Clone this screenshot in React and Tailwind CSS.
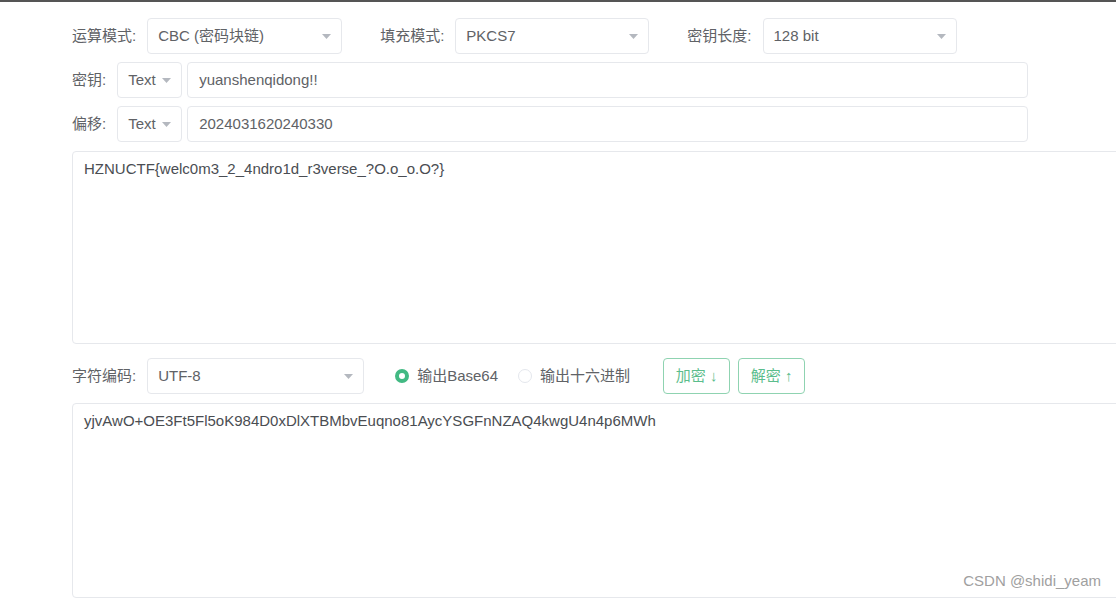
import React from 'react';

const FONT = { fontFamily: '"Liberation Sans", "Noto Sans CJK SC", Arial, sans-serif' };

const Caret = () => (
  <svg width="9" height="5" viewBox="0 0 9 5" className="shrink-0">
    <path d="M0 0 L9 0 L4.5 5 Z" fill="#b4b8bf" />
  </svg>
);

const Select = ({ value, width }) => (
  <div
    className="h-[36px] flex items-center justify-between pl-[10px] pr-[10px] border border-[#e6e8ec] rounded-[4px] bg-white text-[15px] text-[#606266] shrink-0"
    style={{ width }}
  >
    <span>{value}</span>
    <Caret />
  </div>
);

const Label = ({ children }) => (
  <span className="text-[15px] text-[#606266] whitespace-nowrap mr-[11px]">{children}</span>
);

const Radio = ({ checked, label }) => (
  <div className="flex items-center gap-[8px]">
    {checked ? (
      <span className="w-[14px] h-[14px] rounded-full border-[4px] border-[#42b983] bg-white" />
    ) : (
      <span className="w-[14px] h-[14px] rounded-full border border-[#e4e7ed] bg-white" />
    )}
    <span className="text-[15px] text-[#606266]">{label}</span>
  </div>
);

const GreenButton = ({ children }) => (
  <button className="h-[36px] w-[67px] border border-[#8fd3b1] rounded-[4px] text-[15px] text-[#5bbd8c] bg-white">
    {children}
  </button>
);

export default function App() {
  return (
    <div className="relative w-full h-[599px] overflow-hidden bg-white" style={FONT}>
      <div className="h-[2px] bg-[#555555]" />
      <div className="pl-[72px] pt-[16px]">
        {/* top row */}
        <div className="flex items-center h-[36px]">
          <Label>运算模式:</Label>
          <Select value="CBC (密码块链)" width={195} />
          <div className="w-[38px]" />
          <Label>填充模式:</Label>
          <Select value="PKCS7" width={194} />
          <div className="w-[38px]" />
          <Label>密钥长度:</Label>
          <Select value="128 bit" width={194} />
        </div>

        <div className="flex items-center h-[36px] mt-2">
          <Label>密钥:</Label>
          <Select value="Text" width={65} />
          <div className="ml-[5px] w-[841px] h-[36px] flex items-center px-[11px] border border-[#e6e8ec] rounded-[4px] text-[15px] text-[#606266]">
            yuanshenqidong!!
          </div>
        </div>

        <div className="flex items-center h-[36px] mt-2">
          <Label>偏移:</Label>
          <Select value="Text" width={65} />
          <div className="ml-[5px] w-[841px] h-[36px] flex items-center px-[11px] border border-[#e6e8ec] rounded-[4px] text-[15px] text-[#606266]">
            2024031620240330
          </div>
        </div>

        <div className="mt-[9px] w-[1080px] h-[193px] border border-[#e6e8ec] rounded-[4px] px-[11px] pt-[6px] text-[15px] text-[#4a4d52]">
          HZNUCTF{'{'}welc0m3_2_4ndro1d_r3verse_?O.o_o.O?{'}'}
        </div>

        <div className="flex items-center h-[36px] mt-[14px]">
          <Label>字符编码:</Label>
          <Select value="UTF-8" width={217} />
          <div className="w-[31px]" />
          <Radio checked label="输出Base64" />
          <div className="w-[20px]" />
          <Radio label="输出十六进制" />
          <div className="w-[33px]" />
          <GreenButton>加密 ↓</GreenButton>
          <div className="w-[8px]" />
          <GreenButton>解密 ↑</GreenButton>
        </div>

        <div className="mt-[9px] w-[1080px] h-[195px] border border-[#e6e8ec] rounded-[4px] px-[11px] pt-[6px] text-[15px] text-[#4a4d52]">
          yjvAwO+OE3Ft5Fl5oK984D0xDlXTBMbvEuqno81AycYSGFnNZAQ4kwgU4n4p6MWh
        </div>
      </div>

      <div className="absolute right-[15px] bottom-[7px] text-[15px] text-[#a0a0a0]">
        CSDN @shidi_yeam
      </div>
    </div>
  );
}
